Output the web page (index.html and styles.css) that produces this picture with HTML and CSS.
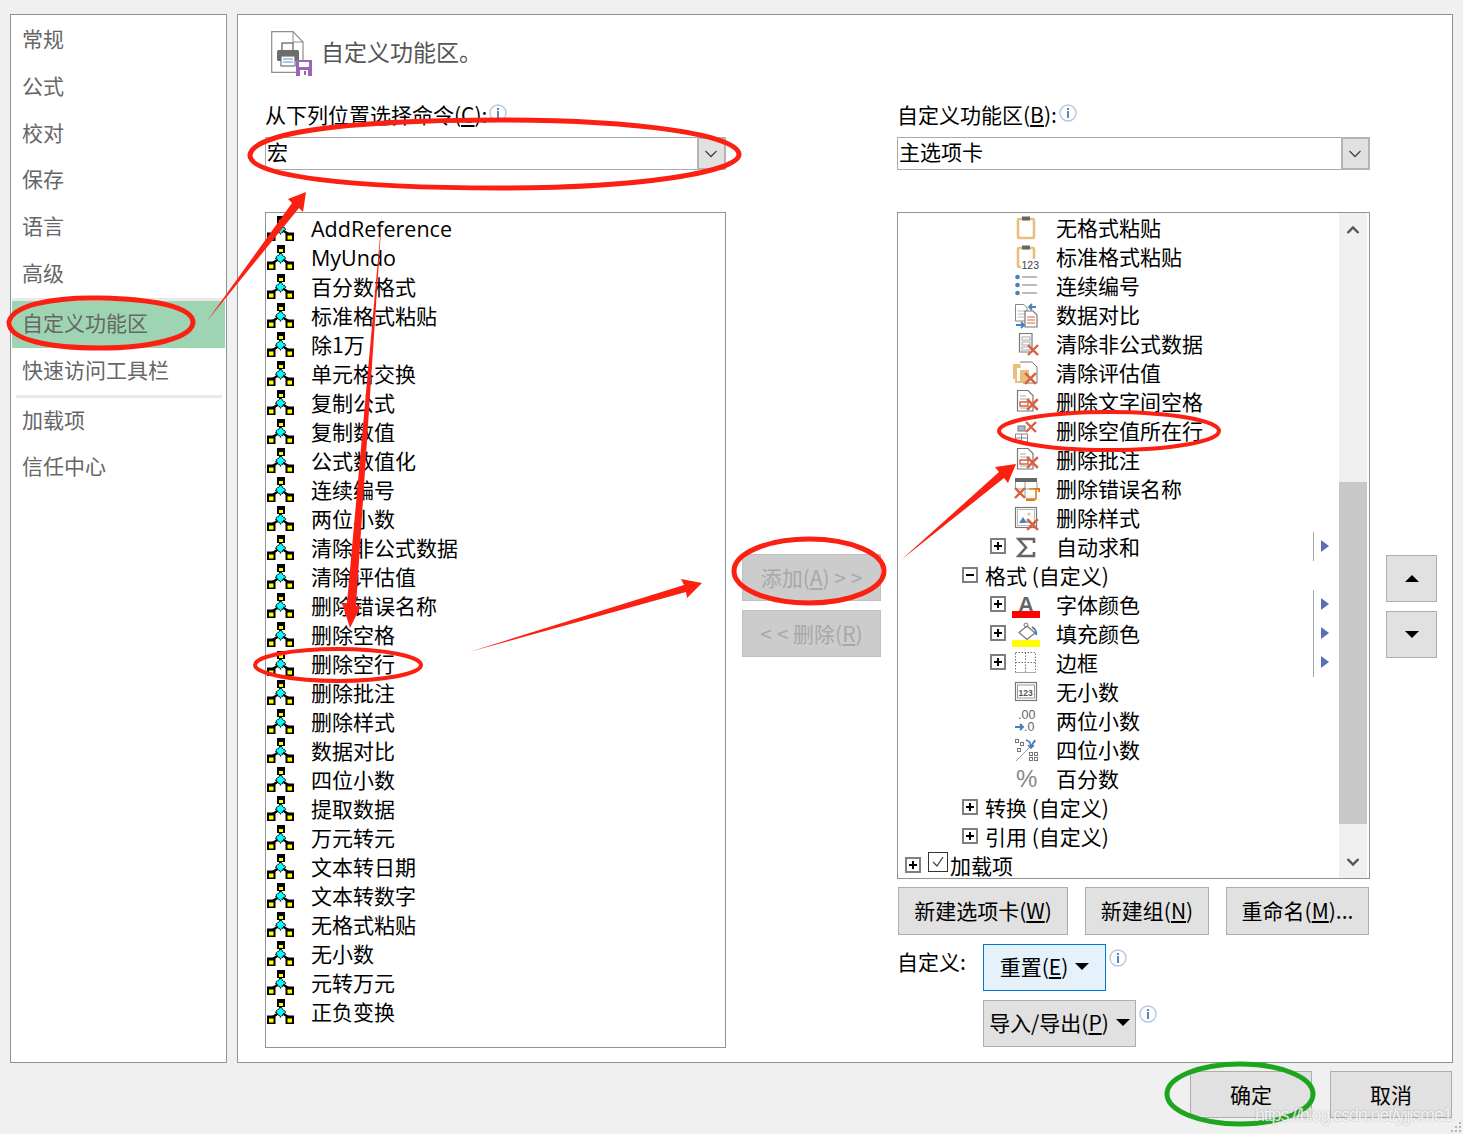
FILE: index.html
```html
<!DOCTYPE html>
<html lang="zh-CN">
<head>
<meta charset="utf-8">
<title>自定义功能区</title>
<link rel="stylesheet" href="styles.css">
</head>
<body>
<svg class="defs" width="0" height="0" aria-hidden="true">
  <symbol id="macro" viewBox="0 0 27 25">
    <path d="M13.5 8V12M13.5 13L4 19M13.5 13L23 19" stroke="#000" stroke-width="2.2" fill="none"/>
    <rect x="10" y="0" width="8" height="8" fill="#000"/><rect x="12" y="4" width="4" height="3" fill="#ff0"/>
    <path d="M13.5 8L18.5 13L13.5 18L8.5 13Z" fill="#0ff" stroke="#000" stroke-width="1.2" stroke-dasharray="1.4 .8"/>
    <rect x="0" y="16.5" width="8.5" height="8.5" fill="#000"/><rect x="2" y="19.5" width="4.5" height="4" fill="#ff0"/>
    <rect x="18.5" y="16.5" width="8.5" height="8.5" fill="#000"/><rect x="20.5" y="19.5" width="4.5" height="4" fill="#ff0"/>
  </symbol>
  <symbol id="info" viewBox="0 0 18 18">
    <circle cx="9" cy="9" r="8" fill="#fff" stroke="#b4c8e4" stroke-width="1.4"/>
    <rect x="8" y="4" width="2" height="2" fill="#5b86c0"/><rect x="8" y="7" width="2" height="7" fill="#5b86c0"/>
  </symbol>
  <symbol id="x" viewBox="0 0 14 14">
    <path d="M2 2L12 12M12 2L2 12" stroke="#d8603f" stroke-width="2.4" fill="none"/>
  </symbol>
</svg>

<div class="dialog">
  <nav class="nav">
    <div class="nav-item">常规</div>
    <div class="nav-item">公式</div>
    <div class="nav-item">校对</div>
    <div class="nav-item">保存</div>
    <div class="nav-item">语言</div>
    <div class="nav-item">高级</div>
    <div class="nav-sep"></div>
    <div class="nav-item nav-on">自定义功能区</div>
    <div class="nav-item">快速访问工具栏</div>
    <div class="nav-sep nav-sep-wide"></div>
    <div class="nav-item">加载项</div>
    <div class="nav-item">信任中心</div>
  </nav>

  <main class="main">
    <header class="head">
      <svg class="head-icon" viewBox="0 0 42 46" width="42" height="46">
        <path d="M.7.7H22L32 11V41.3H.7Z" fill="#fff" stroke="#8d8d8d" stroke-width="1.2"/>
        <path d="M22 .7V11H32" fill="none" stroke="#8d8d8d" stroke-width="1"/>
        <rect x="11" y="12" width="11" height="8" fill="#fff" stroke="#707070" stroke-width="1.4"/>
        <rect x="6" y="19" width="22" height="11" rx="1.5" fill="#6d6d6d"/>
        <rect x="10" y="25" width="14" height="10" fill="#fff" stroke="#707070" stroke-width="1.2"/>
        <path d="M12 28H22M12 31H22" stroke="#5d93c4" stroke-width="1.2"/>
        <rect x="25" y="29" width="16" height="16" fill="#9a66b8"/>
        <rect x="28" y="31" width="10" height="5" fill="#fff"/>
        <rect x="29" y="39" width="8" height="6" fill="#fff"/><rect x="33" y="40" width="2" height="4" fill="#9a66b8"/>
      </svg>
      <h1 class="title">自定义功能区。</h1>
    </header>

    <div class="cols">
      <section class="col col-left">
        <div class="lab">从下列位置选择命令(<u>C</u>):<svg class="info info-lab"><use href="#info"/></svg></div>
        <div class="sel"><span class="sel-text">宏</span><span class="sel-btn"><svg width="14" height="8" viewBox="0 0 14 8"><path d="M1.5 1L7 6.5L12.5 1" fill="none" stroke="#444" stroke-width="1.3"/></svg></span></div>
        <div class="list cmd-list">
          <div class="cmd"><svg class="mac"><use href="#macro"/></svg><span class="cmd-latin">AddReference</span></div>
          <div class="cmd"><svg class="mac"><use href="#macro"/></svg><span class="cmd-latin">MyUndo</span></div>
          <div class="cmd"><svg class="mac"><use href="#macro"/></svg>百分数格式</div>
          <div class="cmd"><svg class="mac"><use href="#macro"/></svg>标准格式粘贴</div>
          <div class="cmd"><svg class="mac"><use href="#macro"/></svg>除1万</div>
          <div class="cmd"><svg class="mac"><use href="#macro"/></svg>单元格交换</div>
          <div class="cmd"><svg class="mac"><use href="#macro"/></svg>复制公式</div>
          <div class="cmd"><svg class="mac"><use href="#macro"/></svg>复制数值</div>
          <div class="cmd"><svg class="mac"><use href="#macro"/></svg>公式数值化</div>
          <div class="cmd"><svg class="mac"><use href="#macro"/></svg>连续编号</div>
          <div class="cmd"><svg class="mac"><use href="#macro"/></svg>两位小数</div>
          <div class="cmd"><svg class="mac"><use href="#macro"/></svg>清除非公式数据</div>
          <div class="cmd"><svg class="mac"><use href="#macro"/></svg>清除评估值</div>
          <div class="cmd"><svg class="mac"><use href="#macro"/></svg>删除错误名称</div>
          <div class="cmd"><svg class="mac"><use href="#macro"/></svg>删除空格</div>
          <div class="cmd"><svg class="mac"><use href="#macro"/></svg>删除空行</div>
          <div class="cmd"><svg class="mac"><use href="#macro"/></svg>删除批注</div>
          <div class="cmd"><svg class="mac"><use href="#macro"/></svg>删除样式</div>
          <div class="cmd"><svg class="mac"><use href="#macro"/></svg>数据对比</div>
          <div class="cmd"><svg class="mac"><use href="#macro"/></svg>四位小数</div>
          <div class="cmd"><svg class="mac"><use href="#macro"/></svg>提取数据</div>
          <div class="cmd"><svg class="mac"><use href="#macro"/></svg>万元转元</div>
          <div class="cmd"><svg class="mac"><use href="#macro"/></svg>文本转日期</div>
          <div class="cmd"><svg class="mac"><use href="#macro"/></svg>文本转数字</div>
          <div class="cmd"><svg class="mac"><use href="#macro"/></svg>无格式粘贴</div>
          <div class="cmd"><svg class="mac"><use href="#macro"/></svg>无小数</div>
          <div class="cmd"><svg class="mac"><use href="#macro"/></svg>元转万元</div>
          <div class="cmd"><svg class="mac"><use href="#macro"/></svg>正负变换</div>
        </div>
      </section>

      <section class="col col-mid">
        <button class="btn btn-off btn-mid"><span>添加(<u>A</u>) &gt; &gt;</span></button>
        <button class="btn btn-off btn-mid"><span>&lt; &lt; 删除(<u>R</u>)</span></button>
      </section>

      <section class="col col-right">
        <div class="lab">自定义功能区(<u>B</u>):<svg class="info info-lab"><use href="#info"/></svg></div>
        <div class="sel"><span class="sel-text">主选项卡</span><span class="sel-btn"><svg width="14" height="8" viewBox="0 0 14 8"><path d="M1.5 1L7 6.5L12.5 1" fill="none" stroke="#444" stroke-width="1.3"/></svg></span></div>
        <div class="list tree-box">
          <div class="tree">
            <div class="row l3"><span class="slot"></span><svg class="ico" viewBox="0 0 28 28"><rect x="6" y="4" width="16" height="19" rx="1" fill="#fff" stroke="#e8c07e" stroke-width="2.6"/><rect x="10" y="1.5" width="8" height="4" fill="#666"/></svg><span>无格式粘贴</span></div>
            <div class="row l3"><span class="slot"></span><svg class="ico" viewBox="0 0 28 28"><rect x="6" y="4" width="16" height="19" rx="1" fill="#fff" stroke="#e8c07e" stroke-width="2.6"/><rect x="10" y="1.5" width="8" height="4" fill="#666"/><rect x="9" y="15" width="19" height="10" fill="#fff"/><text x="9.5" y="24.5" class="ico-num">123</text></svg><span>标准格式粘贴</span></div>
            <div class="row l3"><span class="slot"></span><svg class="ico" viewBox="0 0 28 28"><circle cx="5.5" cy="4" r="2.3" fill="#4a7fb8"/><circle cx="5.5" cy="12" r="2.3" fill="#4a7fb8"/><circle cx="5.5" cy="20" r="2.3" fill="#4a7fb8"/><path d="M10 4H25M10 12H25M10 20H25" stroke="#777" stroke-width="1"/></svg><span>连续编号</span></div>
            <div class="row l3"><span class="slot"></span><svg class="ico" viewBox="0 0 28 28"><path d="M3.5 2.5H12L15 6V19H3.5Z" fill="#fff" stroke="#888"/><path d="M5.5 9H13M5.5 12H13M5.5 15H13" stroke="#bbb"/><path d="M13 9H21L25 13V25H13Z" fill="#fff" stroke="#777" stroke-width="1.2"/><path d="M15 15H23M15 18H23M15 21H23" stroke="#d8603f"/><path d="M24 5H18M20 2L17 5L20 8" fill="none" stroke="#4a7fb8" stroke-width="1.8"/><path d="M4 23H11M9 20L12 23L9 26" fill="none" stroke="#4a7fb8" stroke-width="1.8"/></svg><span>数据对比</span></div>
            <div class="row l3"><span class="slot"></span><svg class="ico" viewBox="0 0 28 28"><path d="M7.5 2.5H20V21H7.5Z" fill="#fff" stroke="#777" stroke-width="1.2"/><rect x="10" y="6" width="8" height="3" fill="none" stroke="#aaa"/><rect x="10" y="11" width="8" height="3" fill="none" stroke="#aaa"/><rect x="10" y="16" width="8" height="3" fill="none" stroke="#aaa"/><use href="#x" x="14" y="12" width="14" height="14"/></svg><span>清除非公式数据</span></div>
            <div class="row l3"><span class="slot"></span><svg class="ico" viewBox="0 0 28 28"><rect x="1" y="4" width="12" height="15" fill="#e8c07e"/><rect x="4" y="7" width="12" height="15" fill="#fff" stroke="#e8c07e" stroke-width="2"/><path d="M8 2H20L25 7V23H11" fill="#fff" stroke="#777"/><rect x="8" y="10" width="9" height="12" fill="#e8c07e"/><use href="#x" x="11" y="11" width="15" height="15"/></svg><span>清除评估值</span></div>
            <div class="row l3"><span class="slot"></span><svg class="ico" viewBox="0 0 28 28"><path d="M5.5 1.5H16L21 6.5V22H5.5Z" fill="#fff" stroke="#777" stroke-width="1.2"/><path d="M8 7H14M8 10H18M8 19H18" stroke="#aaa"/><path d="M8 13H16V17H8Z" fill="none" stroke="#d8603f" stroke-width="1.4"/><use href="#x" x="13" y="8" width="15" height="15"/></svg><span>删除文字间空格</span></div>
            <div class="row l3"><span class="slot"></span><svg class="ico" viewBox="0 0 28 28"><rect x="6" y="8" width="7" height="5" fill="#a8bcd8" stroke="#777"/><path d="M3.5 16H15.5V24H3.5ZM3.5 20H15.5M9.5 16V24" fill="#fff" stroke="#888"/><use href="#x" x="12" y="2" width="14" height="14"/></svg><span>删除空值所在行</span></div>
            <div class="row l3"><span class="slot"></span><svg class="ico" viewBox="0 0 28 28"><path d="M5.5 1.5H16L21 6.5V22H5.5Z" fill="#fff" stroke="#777" stroke-width="1.2"/><path d="M8 7H14M8 10H18M8 19H18" stroke="#aaa"/><path d="M8 13H16V17H8Z" fill="none" stroke="#d8603f" stroke-width="1.4"/><use href="#x" x="13" y="8" width="15" height="15"/></svg><span>删除批注</span></div>
            <div class="row l3"><span class="slot"></span><svg class="ico" viewBox="0 0 28 28"><rect x="3" y="2" width="22" height="4" fill="#666"/><path d="M3.5 6V12M13 6V22M25 6V13M5 13H25" fill="none" stroke="#999"/><use href="#x" x="1" y="10" width="14" height="14"/><path d="M14 24H22V13H27V16" fill="none" stroke="#e07a20" stroke-width="2"/><path d="M17 13H24V23H14" fill="#fff" stroke="#e07a20" stroke-width="1.6"/></svg><span>删除错误名称</span></div>
            <div class="row l3"><span class="slot"></span><svg class="ico" viewBox="0 0 28 28"><rect x="3.5" y="2.5" width="21" height="20" fill="#fff" stroke="#777" stroke-width="1.2"/><rect x="5.5" y="4.5" width="17" height="16" fill="none" stroke="#bbb"/><path d="M7 18L11 12L15 18Z" fill="#4a7fb8"/><circle cx="17" cy="9" r="1.5" fill="#e8c07e"/><path d="M13 18L17 14L20 18Z" fill="#7fa8d0"/><use href="#x" x="13" y="12" width="15" height="15"/></svg><span>删除样式</span></div>
            <div class="row l3 has-exp"><span class="exp"></span><svg class="ico" viewBox="0 0 28 28"><path d="M22 9V5H6.5L14 13.5L6.5 22H22V18" fill="none" stroke="#666" stroke-width="2.6"/></svg><span>自动求和</span><span class="split"></span></div>
            <div class="row l2"><span class="exp exp-minus"></span><span>格式 (自定义)</span></div>
            <div class="row l3 has-exp"><span class="exp"></span><svg class="ico" viewBox="0 0 28 28"><text x="6" y="20" class="ico-a">A</text><rect x="0" y="19" width="28" height="7" fill="#f00"/></svg><span>字体颜色</span><span class="split"></span></div>
            <div class="row l3 has-exp"><span class="exp"></span><svg class="ico" viewBox="0 0 28 28"><path d="M15 5L23 12L15 18.5L7 11.5Z" fill="#fff" stroke="#777" stroke-width="1.2"/><circle cx="14" cy="4" r="2" fill="none" stroke="#777"/><path d="M20 6Q25 9 24 14" fill="none" stroke="#4a7fb8" stroke-width="2"/><rect x="0" y="19" width="28" height="7" fill="#ff0"/></svg><span>填充颜色</span><span class="split"></span></div>
            <div class="row l3 has-exp"><span class="exp"></span><svg class="ico" viewBox="0 0 28 28"><rect x="3.5" y="2.5" width="20" height="20" fill="none" stroke="#777" stroke-dasharray="1.5 1.5"/><path d="M3.5 12.5H23.5M13.5 2.5V22.5" stroke="#777" stroke-dasharray="1.5 1.5"/><path d="M3 22.5H24" stroke="#aaa"/></svg><span>边框</span><span class="split"></span></div>
            <div class="row l3"><span class="slot"></span><svg class="ico" viewBox="0 0 28 28"><rect x="3.5" y="3.5" width="21" height="18" fill="#fff" stroke="#777" stroke-width="1.2"/><rect x="5.5" y="6" width="17" height="13" fill="none" stroke="#999"/><text x="6.5" y="17" class="ico-123">123</text></svg><span>无小数</span></div>
            <div class="row l3"><span class="slot"></span><svg class="ico" viewBox="0 0 28 28"><text x="6" y="11" class="ico-dec">.00</text><text x="12" y="23" class="ico-dec">.0</text><path d="M3 19H11M8 16L11 19L8 22" fill="none" stroke="#4a7fb8" stroke-width="2"/></svg><span>两位小数</span></div>
            <div class="row l3"><span class="slot"></span><svg class="ico" viewBox="0 0 28 28"><path d="M4 24L24 4" stroke="#999"/><g fill="none" stroke="#777"><rect x="3.5" y="2.5" width="3" height="3"/><rect x="8.5" y="5.5" width="3" height="3"/><rect x="5.5" y="11.5" width="3" height="3"/><rect x="17.5" y="15.5" width="3" height="3"/><rect x="22.5" y="15.5" width="3" height="3"/><rect x="17.5" y="20.5" width="3" height="3"/><rect x="22.5" y="20.5" width="3" height="3"/></g><path d="M14 3Q20 5 18 10M23 3Q20 7 19 10M16 8L19 11L22 8" fill="none" stroke="#4a7fb8" stroke-width="1.6"/></svg><span>四位小数</span></div>
            <div class="row l3"><span class="slot"></span><svg class="ico" viewBox="0 0 28 28"><text x="4" y="21" class="ico-pct">%</text></svg><span>百分数</span></div>
            <div class="row l2"><span class="exp"></span><span>转换 (自定义)</span></div>
            <div class="row l2"><span class="exp"></span><span>引用 (自定义)</span></div>
            <div class="row l1"><span class="exp"></span><span class="chk"><svg width="20" height="20" viewBox="0 0 20 20"><path d="M5 10L9 14L15 5" fill="none" stroke="#444" stroke-width="1.3"/></svg></span><span>加载项</span></div>
          </div>
          <div class="scroll">
            <svg class="scroll-up" width="14" height="10" viewBox="0 0 14 10"><path d="M1.5 8L7 2.5L12.5 8" fill="none" stroke="#555" stroke-width="2.4"/></svg>
            <div class="thumb"></div>
            <svg class="scroll-down" width="14" height="10" viewBox="0 0 14 10"><path d="M1.5 2L7 7.5L12.5 2" fill="none" stroke="#555" stroke-width="2.4"/></svg>
          </div>
        </div>
        <div class="btn-row">
          <button class="btn btn-tab"><span>新建选项卡(<u>W</u>)</span></button>
          <button class="btn btn-grp"><span>新建组(<u>N</u>)</span></button>
          <button class="btn btn-ren"><span>重命名(<u>M</u>)...</span></button>
        </div>
        <div class="custom">
          <div class="custom-lab">自定义:</div>
          <div class="custom-btns">
            <div class="custom-line">
              <button class="btn btn-drop btn-reset"><span>重置(<u>E</u>)</span><i class="tri"></i></button>
              <svg class="info info-btn"><use href="#info"/></svg>
            </div>
            <div class="custom-line">
              <button class="btn btn-drop btn-io"><span>导入/导出(<u>P</u>)</span><i class="tri"></i></button>
              <svg class="info info-btn"><use href="#info"/></svg>
            </div>
          </div>
        </div>
      </section>

      <section class="col col-order">
        <button class="btn btn-ord"><i class="tri tri-up"></i></button>
        <button class="btn btn-ord"><i class="tri"></i></button>
      </section>
    </div>
  </main>
</div>

<footer class="foot">
  <button class="btn btn-foot"><span>确定</span></button>
  <button class="btn btn-foot"><span>取消</span></button>
</footer>

<svg class="annot" viewBox="0 0 1463 1134" aria-hidden="true">
  <g fill="none" stroke="#fb2012">
    <path d="M9 322C12 306 50 297 100 298C150 299 192 306 193 322C193 338 150 348 100 348C50 348 8 340 9 322Z" stroke-width="5"/>
    <path d="M250 155C252 135 330 120 500 120C640 120 737 135 739 154C740 172 640 188 500 188C350 188 248 176 250 155Z" stroke-width="5"/>
    <ellipse cx="338" cy="665" rx="83" ry="16" stroke-width="4"/>
    <ellipse cx="809" cy="571" rx="75" ry="32" stroke-width="5"/>
    <ellipse cx="1109" cy="431" rx="110" ry="19" stroke-width="4"/>
  </g>
  <ellipse cx="1240" cy="1094" rx="73" ry="30" fill="none" stroke="#1ea51e" stroke-width="5"/>
  <g fill="#fb2012">
    <polygon points="207,321 292,203 288,199 306,192 303,212 299,208"/>
    <polygon points="382,215 356,606 361,606 350,628 342,603 347,603"/>
    <polygon points="469,652 684,585 681,579 702,583 687,598 686,592"/>
    <polygon points="901,560 999,472 995,467 1016,464 1008,483 1004,478"/>
  </g>
  <g fill="#b4b4b4">
    <rect x="1459" y="1122" width="2" height="2"/>
    <rect x="1459" y="1126" width="2" height="2"/>
    <rect x="1455" y="1126" width="2" height="2"/>
    <rect x="1459" y="1130" width="2" height="2"/>
    <rect x="1455" y="1130" width="2" height="2"/>
    <rect x="1451" y="1130" width="2" height="2"/>
  </g>
</svg>
<div class="mark">https://blog.csdn.net/yjjisme1</div>
</body>
</html>
```

FILE: styles.css
```css
* { box-sizing: border-box; }
html, body { margin: 0; height: 100%; }
body {
  position: relative;
  width: 1463px;
  height: 1134px;
  overflow: hidden;
  padding: 14px 10px 0;
  background: #f0f0f0;
  color: #000;
  font: 21px/29px "Noto Sans CJK SC", "Noto Sans", sans-serif;
}
.defs { position: absolute; }
u { text-underline-offset: 2px; }

.dialog { display: flex; gap: 10px; height: 1049px; }

.nav {
  width: 217px;
  padding: 2px 1px 0;
  background: #fff;
  border: 1px solid #8f9296;
  color: #666;
}
.nav-item { height: 46.8px; padding-left: 10px; line-height: 42px; }
.nav-sep { height: 3px; margin: 0 0 0 0; background: #e9e9e9; }
.nav-sep-wide { margin: 0 3px 0 4px; }
.nav-on { height: 47px; padding-left: 10px; background: #9fd4b2; line-height: 42px; }

.main {
  width: 1216px;
  padding: 16px 0 0 27px;
  background: #fff;
  border: 1px solid #8f9296;
}
.head { display: flex; align-items: flex-start; height: 72px; padding-left: 6px; }
.head-icon { flex: none; }
.title { margin: 4px 0 0 8px; font-size: 23px; font-weight: 400; line-height: 32px; color: #555; }

.cols { display: flex; gap: 16px; }
.col { flex: none; }
.col-left { width: 461px; }
.col-mid { width: 139px; display: flex; flex-direction: column; gap: 9px; padding-top: 451px; }
.col-right { width: 473px; }
.col-order { width: 51px; display: flex; flex-direction: column; gap: 9px; padding-top: 452px; }

.lab { display: flex; height: 34px; line-height: 23px; }
.info { flex: none; width: 18px; height: 18px; }
.info-lab { margin: 1px 0 0 2px; }
.sel {
  display: flex;
  justify-content: space-between;
  height: 33px;
  margin-bottom: 42px;
  background: #fff;
  border: 1px solid #ababab;
  line-height: 27px;
}
.sel-text { padding-left: 1px; }
.sel-btn {
  display: flex;
  align-items: center;
  justify-content: center;
  width: 29px;
  margin: -1px -1px -1px 0;
  padding-right: 2px;
  background: #e1e1e1;
  border: 2px solid #b4b4b4;
}

.list { background: #fff; border: 1px solid #8f9296; }
.cmd-list { height: 836px; padding-top: 1px; }
.cmd { display: flex; align-items: center; height: 29px; padding-left: 1px; white-space: nowrap; }
.mac { flex: none; width: 27px; height: 25px; margin-right: 17px; }
.cmd-latin { font-family: "Open Sans", "Noto Sans", sans-serif; font-size: 21.5px; }

.tree-box { display: flex; height: 667px; overflow: hidden; }
.tree { width: 441px; padding-top: 0; flex: none; }
.row { display: flex; align-items: center; height: 29px; white-space: nowrap; }
.l3 { padding-left: 92px; }
.l2 { padding-left: 64px; }
.l1 { padding-left: 7px; }
.slot { flex: none; width: 16px; margin-right: 6px; }
.ico { flex: none; width: 28px; height: 28px; margin: 3px 16px 0 0; }
.ico-num { font: 10.5px "Liberation Sans", sans-serif; fill: #444; }
.ico-a { font: 700 22px "Liberation Sans", sans-serif; fill: #666; }
.ico-123 { font: 700 8.5px "Liberation Sans", sans-serif; fill: #555; }
.ico-dec { font: 12.5px "Liberation Sans", sans-serif; fill: #666; }
.ico-pct { font: 24px "Liberation Sans", sans-serif; fill: #888; }

.exp {
  flex: none;
  width: 16px;
  height: 16px;
  margin-top: -1px;
  margin-right: 6px;
  border: 2px solid #7f7f7f;
  background:
    linear-gradient(#000, #000) center / 8px 2px no-repeat,
    linear-gradient(#000, #000) center / 2px 8px no-repeat;
}
.exp-minus { background: linear-gradient(#000, #000) center / 8px 2px no-repeat; }
.l2 .exp { margin-right: 7px; }
.l1 .exp { margin-right: 7px; }
.chk {
  flex: none;
  width: 20px;
  height: 20px;
  margin: -7px 2px 0 0;
  background: #fff;
  border: 1px solid #333;
}
.chk svg { display: block; margin: -1px; }
.split {
  position: relative;
  width: 26px;
  height: 29px;
  margin-left: auto;
  border-left: 1px solid #a8a8a8;
}
.split::after {
  content: "";
  position: absolute;
  left: 7px;
  top: 8px;
  border-style: solid;
  border-width: 6px 0 6px 8px;
  border-color: transparent transparent transparent #5a70b4;
}

.scroll {
  flex: none;
  display: flex;
  flex-direction: column;
  align-items: center;
  width: 28px;
  background: #f0f0f0;
}
.scroll-up { flex: none; margin-top: 12px; }
.thumb { flex: none; width: 100%; height: 342px; margin-top: 247px; background: #c8c8c8; }
.scroll-down { flex: none; margin-top: auto; margin-bottom: 11px; }

.btn {
  display: flex;
  align-items: center;
  justify-content: center;
  padding: 0 0 2px;
  background: #e1e1e1;
  border: 1px solid #adadad;
  border-radius: 0;
  color: #000;
  font: inherit;
  line-height: 29px;
  white-space: nowrap;
}
.btn-off { background: #ccc; border-color: #bfbfbf; color: #a8a8a8; padding-bottom: 0; }
.btn-mid { width: 139px; height: 47px; }
.btn-ord { width: 51px; height: 47px; padding: 0; }
.btn-row { display: flex; gap: 17px; margin-top: 8px; padding-left: 1px; }
.btn-tab { width: 170px; height: 48px; }
.btn-grp { width: 124px; height: 48px; }
.btn-ren { width: 143px; height: 48px; }

.custom { display: flex; margin-top: 9px; }
.custom-lab { width: 86px; padding: 3px 0 0; }
.custom-btns { display: flex; flex-direction: column; gap: 9px; }
.custom-line { display: flex; align-items: flex-start; gap: 3px; }
.custom-line .info-btn { margin-top: 5px; }
.btn-drop { height: 47px; gap: 7px; }
.btn-reset { width: 123px; background: #e5f1fb; border-color: #0078d7; }
.btn-io { width: 153px; }
.tri {
  display: block;
  width: 0;
  height: 0;
  border-style: solid;
  border-width: 7px 7px 0;
  border-color: #000 transparent transparent;
}
.tri-up { border-width: 0 7px 7px; border-color: transparent transparent #000; }

.foot { display: flex; justify-content: flex-end; gap: 18px; margin-top: 8px; padding-right: 1px; }
.btn-foot { width: 122px; height: 47px; padding: 0; }

.annot { position: absolute; left: 0; top: 0; width: 1463px; height: 1134px; pointer-events: none; }
.mark {
  position: absolute;
  left: 1255px;
  top: 1102px;
  font: 18px/26px "Liberation Sans", sans-serif;
  letter-spacing: -1.15px;
  color: rgba(255, 255, 255, .8);
  text-shadow: 0 0 2px rgba(120, 120, 120, .55);
  white-space: nowrap;
}
```
